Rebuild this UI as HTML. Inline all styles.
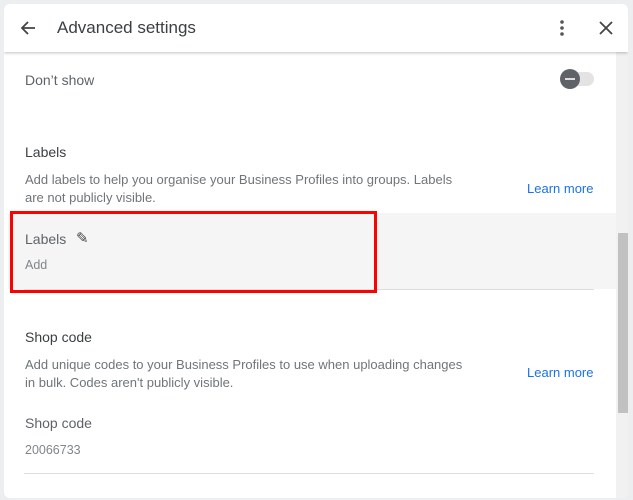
<!DOCTYPE html>
<html><head><style>
body{margin:0;width:633px;height:500px;background:#eceeef;font-family:"Liberation Sans",sans-serif;overflow:hidden;position:relative}
.p{position:absolute;left:4px;top:4px;width:624px;height:494px;background:#fff;border-radius:6px;overflow:hidden}
.t{position:absolute;white-space:nowrap}
.hdr{position:absolute;left:0;top:0;width:624px;height:48px;background:#fff;box-shadow:0 1px 3px rgba(0,0,0,.25);z-index:2}
.g{color:#5f6368}
.lm{color:#1a73e8;font-size:13px}
</style></head><body>
<div class="p">
 <div class="hdr">
  <svg style="position:absolute;left:15px;top:15px" width="18" height="18" viewBox="0 0 18 18"><path d="M16 9H3M9 3L3 9l6 6" stroke="#444" stroke-width="1.8" fill="none"/></svg>
  <div class="t" style="left:53px;top:14px;font-size:17px;color:#3c4043">Advanced settings</div>
  <svg style="position:absolute;left:555px;top:15px" width="6" height="18"><circle cx="3" cy="3" r="1.8" fill="#555"/><circle cx="3" cy="9" r="1.8" fill="#555"/><circle cx="3" cy="15" r="1.8" fill="#555"/></svg>
  <svg style="position:absolute;left:595px;top:17px" width="14" height="14"><path d="M1 1L13 13M13 1L1 13" stroke="#444" stroke-width="1.8"/></svg>
 </div>
 <div class="t g" style="left:21px;top:68px;font-size:14px">Don’t show</div>
 <div style="position:absolute;left:560px;top:68px;width:30px;height:14px;border-radius:7px;background:#e3e3e3"></div>
 <div style="position:absolute;left:556px;top:65px;width:20px;height:20px;border-radius:50%;background:#5f6368"><div style="position:absolute;left:5px;top:9px;width:10px;height:2px;background:#ddd"></div></div>
 <div class="t" style="left:21px;top:140px;font-size:14px;color:#3c4043">Labels</div>
 <div class="t g" style="left:21px;top:167px;font-size:13px;line-height:18px;color:#70757a">Add labels to help you organise your Business Profiles into groups. Labels<br>are not publicly visible.</div>
 <div class="t lm" style="left:523px;top:177px">Learn more</div>
 <div style="position:absolute;left:4px;top:209px;width:609px;height:76px;background:#f5f5f5"></div>
 <div style="position:absolute;left:20px;top:285px;width:570px;height:1px;background:#ddd"></div>
 <div class="t g" style="left:21px;top:227px;font-size:14px">Labels</div>
 <div class="t" style="left:72px;top:225px;font-size:15px;color:#444">✎</div>
 <div class="t" style="left:21px;top:254px;font-size:12.5px;color:#80868b">Add</div>
 <div style="position:absolute;left:6px;top:207px;width:361px;height:76px;border:3px solid #f00"></div>
 <div class="t" style="left:21px;top:325px;font-size:14px;color:#3c4043">Shop code</div>
 <div class="t" style="left:21px;top:352px;font-size:13px;line-height:18px;color:#70757a">Add unique codes to your Business Profiles to use when uploading changes<br>in bulk. Codes aren't publicly visible.</div>
 <div class="t lm" style="left:523px;top:361px">Learn more</div>
 <div class="t g" style="left:21px;top:411px;font-size:14px">Shop code</div>
 <div class="t" style="left:21px;top:439px;font-size:12.5px;color:#80868b">20066733</div>
 <div style="position:absolute;left:20px;top:469px;width:570px;height:1px;background:#ddd"></div>
 <div style="position:absolute;left:612px;top:48px;width:12px;height:446px;background:#f1f1f1"></div>
 <div style="position:absolute;left:614px;top:229px;width:10px;height:180px;background:#c1c1c1"></div>
</div>
</body></html>
